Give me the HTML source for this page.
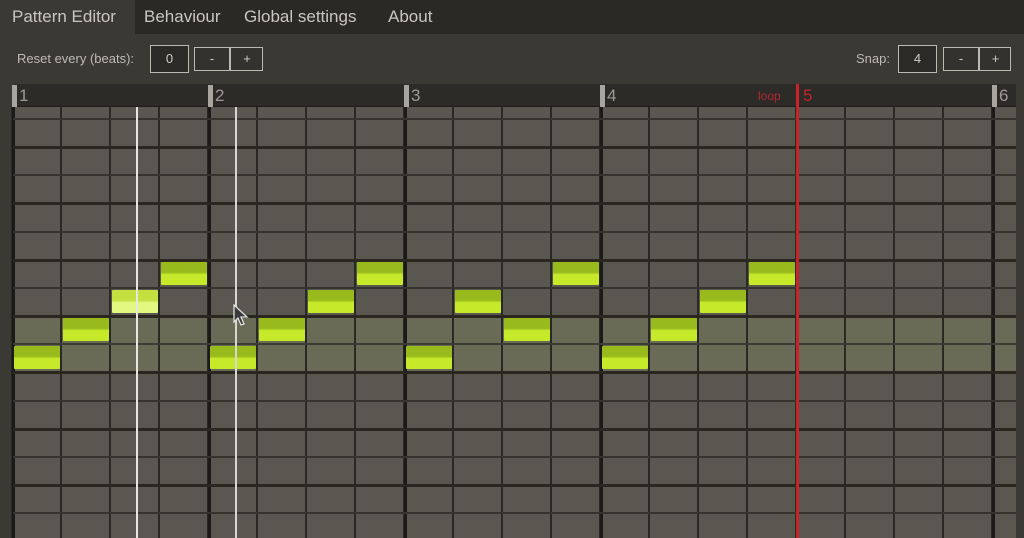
<!DOCTYPE html>
<html><head><meta charset="utf-8"><style>
*{margin:0;padding:0;box-sizing:border-box}
body{width:1024px;height:538px;overflow:hidden;background:#3b3934;font-family:"Liberation Sans","DejaVu Sans",sans-serif;position:relative}
.abs{position:absolute}
.tabs{left:0;top:0;width:1024px;height:34px;background:#2b2926}
.tab{position:absolute;top:0;height:34px;line-height:33px;color:#c9c6bf;font-size:17px}
.lbl{color:#bdbab3;font-size:13px}
.box{border:1.5px solid #bdbab3;background:#2c2a27;color:#d0cdc6;font-size:13px;text-align:center}
.hl{left:13px;width:1003px;height:2px;background:#29271f}
.note{position:absolute;width:46px;height:23px;background:linear-gradient(#98ba1c 0,#98ba1c 45%,#c6ea2a 55%,#c6ea2a 100%);border-radius:1px}
.num{position:absolute;top:86px;color:#9d9a94;font-size:17px}
.mk{position:absolute;top:85px;width:5px;height:22px;background:#a9a6a0}
</style></head><body>
<div class="abs tabs"></div>
<div class="abs" style="left:0;top:0;width:135px;height:34px;background:#3b3934"></div>
<div class="tab" style="left:12px">Pattern Editor</div>
<div class="tab" style="left:144px">Behaviour</div>
<div class="tab" style="left:244px">Global settings</div>
<div class="tab" style="left:388px">About</div>

<div class="abs lbl" style="left:17px;top:51px">Reset every (beats):</div>
<div class="abs box" style="left:150px;top:45px;width:39px;height:28px;line-height:25px">0</div>
<div class="abs box" style="left:194px;top:47px;width:69px;height:24px;line-height:21px;background:#34322e"><span style="position:absolute;left:0;width:34px">-</span><span style="position:absolute;left:34px;top:-1px;width:1.5px;height:23px;background:#bdbab3"></span><span style="position:absolute;left:35px;width:34px">+</span></div>

<div class="abs lbl" style="left:856px;top:51px">Snap:</div>
<div class="abs box" style="left:898px;top:45px;width:39px;height:28px;line-height:25px">4</div>
<div class="abs box" style="left:943px;top:47px;width:68px;height:24px;line-height:21px;background:#34322e"><span style="position:absolute;left:0;width:34px">-</span><span style="position:absolute;left:34px;top:-1px;width:1.5px;height:23px;background:#bdbab3"></span><span style="position:absolute;left:35px;width:33px">+</span></div>

<div class="abs" style="left:13px;top:84px;width:1003px;height:24px;background:#2d2b28;border-bottom:2px solid #1e1c1a"></div>
<div class="mk" style="left:12px"></div><div class="num" style="left:19px">1</div>
<div class="mk" style="left:208px"></div><div class="num" style="left:215px">2</div>
<div class="mk" style="left:404px"></div><div class="num" style="left:411px">3</div>
<div class="mk" style="left:600px"></div><div class="num" style="left:607px">4</div>
<div class="num" style="left:803px;color:#c2262c">5</div>
<div class="mk" style="left:992px"></div><div class="num" style="left:999px">6</div>
<div class="abs" style="left:758px;top:89px;color:#b02830;font-size:12px">loop</div>

<div class="abs" style="left:13px;top:107px;width:1003px;height:431px;background:#5a5750"></div>
<div class="abs" style="left:13px;top:317px;width:1003px;height:56px;background:#6a6b56"></div>
<div class="abs" style="left:11px;top:107px;width:1005px;height:431px;background-image:repeating-linear-gradient(to right,#2a2825 0,#2a2825 2px,transparent 2px,transparent 49px)"></div>
<div class="abs" style="left:12px;top:107px;width:1004px;height:431px;background-image:repeating-linear-gradient(to right,#1c1a18 0,#1c1a18 3px,transparent 3px,transparent 196px)"></div>
<div class="hl abs" style="top:118px;height:2px;background:#35332d"></div>
<div class="hl abs" style="top:146px;height:3px"></div>
<div class="hl abs" style="top:174px;background:#35332d"></div>
<div class="hl abs" style="top:202px;height:3px"></div>
<div class="hl abs" style="top:231px;background:#35332d"></div>
<div class="hl abs" style="top:259px;height:3px"></div>
<div class="hl abs" style="top:287px;background:#35332d"></div>
<div class="hl abs" style="top:315px;height:3px"></div>
<div class="hl abs" style="top:343px;background:#3d3c32"></div>
<div class="hl abs" style="top:371px;height:3px"></div>
<div class="hl abs" style="top:400px;background:#35332d"></div>
<div class="hl abs" style="top:428px;height:3px"></div>
<div class="hl abs" style="top:456px;background:#35332d"></div>
<div class="hl abs" style="top:484px;height:3px"></div>
<div class="hl abs" style="top:512px;background:#35332d"></div>

<div class="note" style="left:14px;top:346px"></div>
<div class="note" style="left:63px;top:318px"></div>
<div class="note" style="left:112px;top:290px;background:linear-gradient(#c4e040 0,#c4e040 45%,#e2f880 55%)"></div>
<div class="note" style="left:161px;top:262px"></div>
<div class="note" style="left:210px;top:346px"></div>
<div class="note" style="left:259px;top:318px"></div>
<div class="note" style="left:308px;top:290px"></div>
<div class="note" style="left:357px;top:262px"></div>
<div class="note" style="left:406px;top:346px"></div>
<div class="note" style="left:455px;top:290px"></div>
<div class="note" style="left:504px;top:318px"></div>
<div class="note" style="left:553px;top:262px"></div>
<div class="note" style="left:602px;top:346px"></div>
<div class="note" style="left:651px;top:318px"></div>
<div class="note" style="left:700px;top:290px"></div>
<div class="note" style="left:749px;top:262px"></div>

<div class="abs" style="left:136px;top:107px;width:2px;height:431px;background:#e8e6e0"></div>
<div class="abs" style="left:235px;top:107px;width:2px;height:431px;background:#d8d6d0"></div>
<div class="abs" style="left:796px;top:84px;width:3px;height:454px;background:#c8232b"></div>
<div class="abs" style="left:1016px;top:84px;width:8px;height:454px;background:#3b3934"></div>

<svg class="abs" style="left:233px;top:304px" width="18" height="24" viewBox="0 0 18 24"><path d="M1 1 L1 18 L5 14 L8 21 L11 20 L8 13 L14 13 Z" fill="#3a3a3a" stroke="#e0e0e0" stroke-width="1.3"/></svg>
</body></html>
